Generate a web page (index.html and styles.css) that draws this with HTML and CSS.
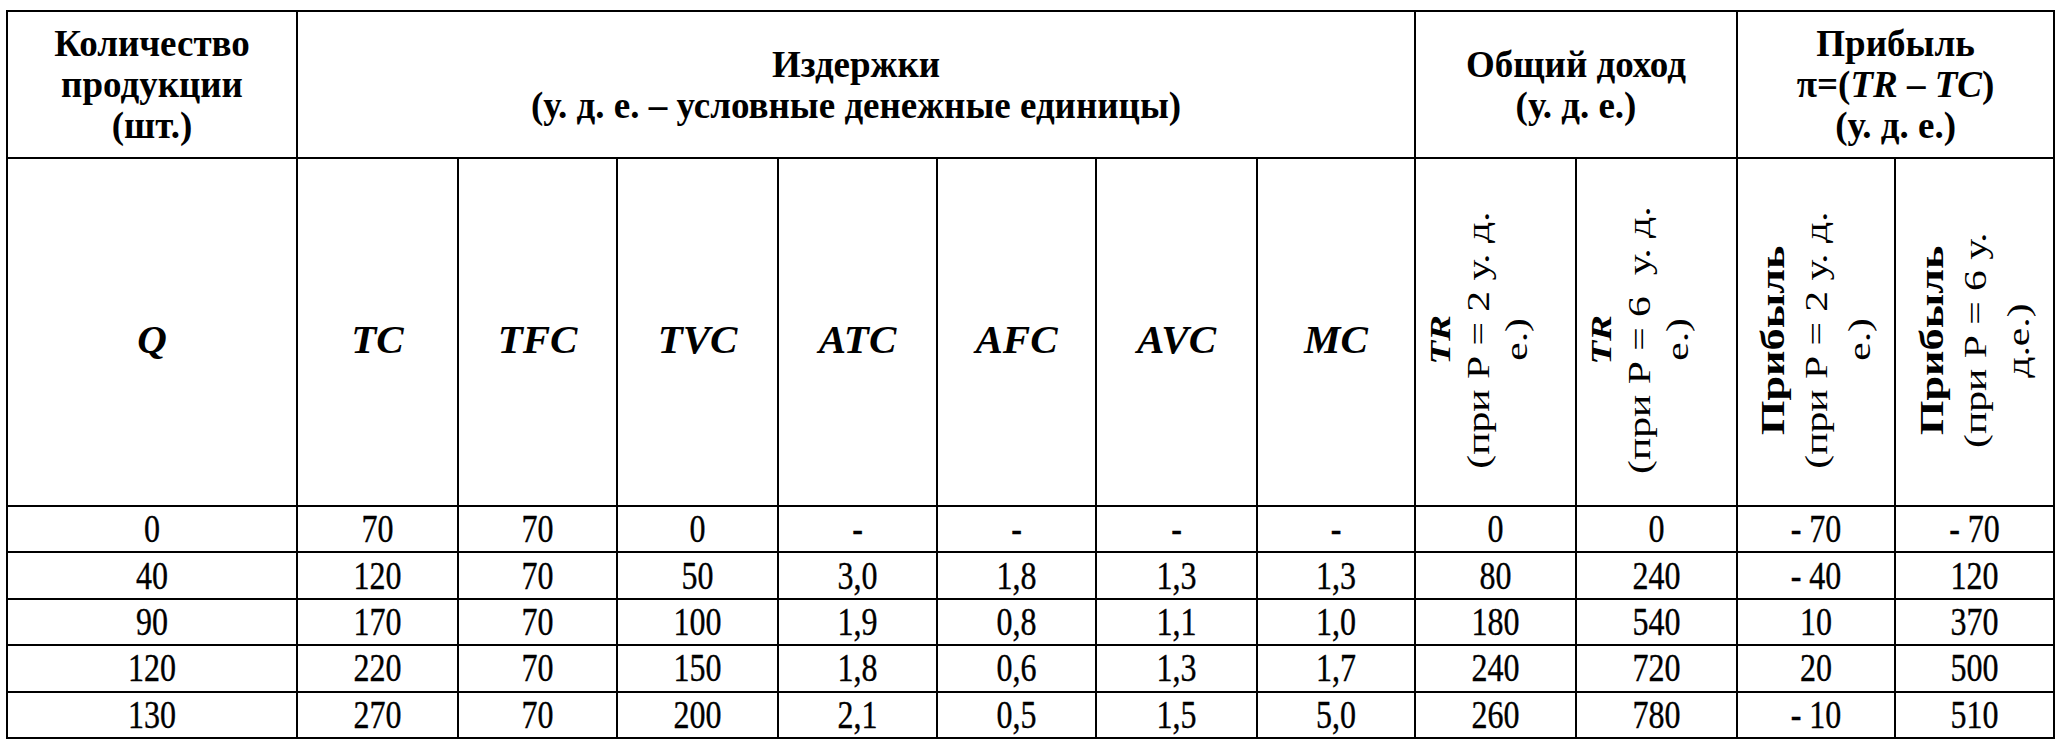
FILE: index.html
```html
<!DOCTYPE html>
<html lang="ru">
<head>
<meta charset="utf-8">
<title>Издержки и прибыль</title>
<link rel="stylesheet" href="styles.css">
</head>
<body>
<div class="page">
<table class="costs">
  <colgroup>
    <col class="c-q">
    <col class="c-a"><col class="c-b"><col class="c-a"><col class="c-b"><col class="c-b"><col class="c-a"><col class="c-c">
    <col class="c-d"><col class="c-a"><col class="c-c"><col class="c-b">
  </colgroup>
  <thead>
    <tr class="h1">
      <th>Количество<br>продукции<br>(шт.)</th>
      <th colspan="7">Издержки<br>(у. д. е. – условные денежные единицы)</th>
      <th colspan="2" class="income">Общий доход<br>(у. д. е.)</th>
      <th colspan="2" class="profit">Прибыль<br>π=(<i>TR</i> – <i>TC</i>)<br>(у. д. е.)</th>
    </tr>
    <tr class="h2">
      <th class="sym">Q</th>
      <th class="sym">TC</th>
      <th class="sym">TFC</th>
      <th class="sym">TVC</th>
      <th class="sym">ATC</th>
      <th class="sym">AFC</th>
      <th class="sym">AVC</th>
      <th class="sym">MC</th>
      <th class="rot"><div class="rotbox rb-tr"><div class="vt vt-tr"><b class="tr">TR</b><br>(при Р = 2 у. д.<br>е.)</div></div></th>
      <th class="rot"><div class="rotbox rb-tr"><div class="vt vt-tr"><b class="tr">TR</b><br>(при Р = 6&nbsp; у. д.<br>е.)</div></div></th>
      <th class="rot"><div class="rotbox"><div class="vt vt-pr"><b class="pr">Прибыль</b><br>(при Р = 2 у. д.<br>е.)</div></div></th>
      <th class="rot"><div class="rotbox"><div class="vt vt-pr"><b class="pr">Прибыль</b><br>(при Р = 6 у.<br>д.е.)</div></div></th>
    </tr>
  </thead>
  <tbody>
    <tr><td><span>0</span></td><td><span>70</span></td><td><span>70</span></td><td><span>0</span></td><td><span>-</span></td><td><span>-</span></td><td><span>-</span></td><td><span>-</span></td><td><span>0</span></td><td><span>0</span></td><td><span>- 70</span></td><td><span>- 70</span></td></tr>
    <tr><td><span>40</span></td><td><span>120</span></td><td><span>70</span></td><td><span>50</span></td><td><span>3,0</span></td><td><span>1,8</span></td><td><span>1,3</span></td><td><span>1,3</span></td><td><span>80</span></td><td><span>240</span></td><td><span>- 40</span></td><td><span>120</span></td></tr>
    <tr><td><span>90</span></td><td><span>170</span></td><td><span>70</span></td><td><span>100</span></td><td><span>1,9</span></td><td><span>0,8</span></td><td><span>1,1</span></td><td><span>1,0</span></td><td><span>180</span></td><td><span>540</span></td><td><span>10</span></td><td><span>370</span></td></tr>
    <tr><td><span>120</span></td><td><span>220</span></td><td><span>70</span></td><td><span>150</span></td><td><span>1,8</span></td><td><span>0,6</span></td><td><span>1,3</span></td><td><span>1,7</span></td><td><span>240</span></td><td><span>720</span></td><td><span>20</span></td><td><span>500</span></td></tr>
    <tr><td><span>130</span></td><td><span>270</span></td><td><span>70</span></td><td><span>200</span></td><td><span>2,1</span></td><td><span>0,5</span></td><td><span>1,5</span></td><td><span>5,0</span></td><td><span>260</span></td><td><span>780</span></td><td><span>- 10</span></td><td><span>510</span></td></tr>
  </tbody>
</table>
</div>
</body>
</html>
```
FILE: styles.css
```css
html, body {
  margin: 0;
  padding: 0;
  background: #ffffff;
}

.page {
  padding: 10px 0 0 6px;
}

.costs {
  border-collapse: collapse;
  table-layout: fixed;
  width: 2046px;
  font-family: "Liberation Serif", "Times New Roman", serif;
  color: #000;
}

.c-q { width: 290px; }
.c-a { width: 161px; }
.c-b { width: 159px; }
.c-c { width: 158px; }
.c-d { width: 161px; }

.costs th,
.costs td {
  border: 2px solid #000;
  padding: 0;
  text-align: center;
  vertical-align: middle;
}

.h1 th {
  height: 145px;
  font-size: 37px;
  font-weight: bold;
  line-height: 41px;
}

.h2 th {
  height: 346px;
}

.costs th.sym {
  height: 332px;
  font-size: 41px;
  font-weight: bold;
  font-style: italic;
  padding-top: 14px;
}

.rotbox {
  display: flex;
  justify-content: center;
  align-items: center;
  height: 300px;
  padding-top: 16px;
}

.rb-tr {
  padding-right: 36px;
}

.vt {
  writing-mode: vertical-rl;
  transform: rotate(180deg) scaleY(1.3);
  height: 250px;
  text-align: center;
  font-size: 32px;
  font-weight: normal;
  white-space: nowrap;
}

.vt-tr {
  line-height: 38px;
}

.vt-pr {
  line-height: 43px;
}

.vt .tr {
  font-size: 30px;
  font-style: italic;
  font-weight: bold;
}

.vt .pr {
  font-size: 34px;
  font-weight: bold;
}

.costs td {
  height: 44.4px;
  font-size: 32px;
  line-height: 38px;
}

.costs td span {
  display: inline-block;
  transform: scaleY(1.22);
  -webkit-text-stroke: 0.3px #000;
}
```
